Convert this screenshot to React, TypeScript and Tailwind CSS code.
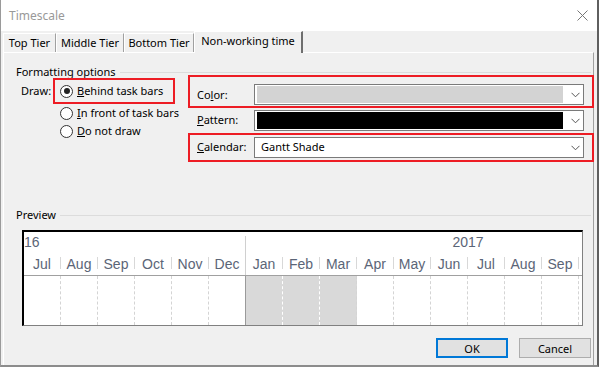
const months = ['Jul', 'Aug', 'Sep', 'Oct', 'Nov', 'Dec', 'Jan', 'Feb', 'Mar', 'Apr', 'May', 'Jun', 'Jul', 'Aug', 'Sep']

function Chevron() {
  return (
    <svg width="9" height="6" viewBox="0 0 9 6" className="ml-[8px] shrink-0">
      <polyline points="0.5,0.8 4.5,4.8 8.5,0.8" fill="none" stroke="#555" strokeWidth="1" />
    </svg>
  )
}

function Dropdown({ children }: { children: React.ReactNode }) {
  return (
    <div className="flex h-[21px] w-[330px] items-center border border-[#7a7a7a] bg-white pl-[2px] pr-[3px]">
      <div className="flex h-full flex-1 items-center py-[1px]">{children}</div>
      <Chevron />
    </div>
  )
}

function Radio({ checked }: { checked?: boolean }) {
  return (
    <span className="flex h-[13px] w-[13px] shrink-0 items-center justify-center rounded-full border border-[#333] bg-white">
      {checked && <span className="h-[6px] w-[6px] rounded-full bg-[#222]" />}
    </span>
  )
}

function GroupHeader({ label, className }: { label: string; className?: string }) {
  return (
    <div className={`flex h-[14px] items-center pl-[12px] pr-[2px] ${className ?? ''}`}>
      <span className="leading-[14px]">{label}</span>
      <div className="ml-[4px] h-px flex-1 bg-[#dcdcdc]" />
    </div>
  )
}

function Chart() {
  return (
    <div className="ml-[18px] mt-[8px] h-[96px] w-[561px] overflow-hidden border-t-2 border-l-2 border-t-black border-l-black border-r border-b border-r-[#808080] border-b-[#808080] bg-white font-['Liberation_Sans',Arial,sans-serif] text-[14px] text-[#5b6577]">
      <div className="flex h-[20px]">
        <div className="w-[221px] shrink-0 leading-[20px]">16</div>
        <div className="mt-[4px] w-px shrink-0 bg-[#d0d0d0]" />
        <div className="w-[444px] shrink-0 text-center leading-[20px]">2017</div>
      </div>
      <div className="flex h-[24px] border-b border-[#a0a0a0]">
        {months.map((m, i) => (
          <div key={i} className="flex w-[37px] shrink-0">
            <span className="flex-1 pt-[1px] text-center leading-[22px]">{m}</span>
            {i === 5 ? (
              <span className="w-px bg-[#d0d0d0]" />
            ) : (
              <span className="mt-[5px] h-[12px] w-px bg-[#d8d8d8]" />
            )}
          </div>
        ))}
      </div>
      <div className="flex h-[49px]">
        {months.map((m, i) => {
          const shaded = i >= 6 && i <= 8
          let cls = 'border-dashed border-[#d4d4d4]'
          if (i === 5) cls = 'border-solid border-[#9a9a9a]'
          else if (i === 6 || i === 7) cls = 'border-dashed border-white'
          return (
            <div
              key={i}
              className={`h-full w-[37px] shrink-0 border-r ${cls} ${shaded ? 'bg-[#d9d9d9]' : ''}`}
            />
          )
        })}
      </div>
    </div>
  )
}

export default function App() {
  return (
    <div className="h-[368px] w-[600px] bg-white font-['Noto_Sans',sans-serif] text-[11px] text-black">
      <div className="flex h-[367px] w-[599px] flex-col border-l border-r-2 border-b-2 border-l-[#9a9a9a] border-r-[#5f5f5f] border-b-[#8c8c8c] bg-[#f0f0f0]">
        {/* title bar */}
        <div className="flex h-[31px] shrink-0 items-center justify-between bg-white pl-[8px] pr-[8px]">
          <span className="text-[12px] text-[#999]">Timescale</span>
          <svg width="11" height="11" viewBox="0 0 11 11" className="mr-[1px]">
            <line x1="0.5" y1="0.5" x2="10.5" y2="10.5" stroke="#777" strokeWidth="1" />
            <line x1="10.5" y1="0.5" x2="0.5" y2="10.5" stroke="#777" strokeWidth="1" />
          </svg>
        </div>

        {/* tabs */}
        <div className="flex h-[21px] shrink-0 items-end pl-[2px]">
          {[
            ['Top Tier', 'w-[53px]'],
            ['Middle Tier', 'w-[68px]'],
            ['Bottom Tier', 'w-[70px]'],
          ].map(([t, w]) => (
            <div
              key={t}
              className={`${w} flex h-[19px] items-center justify-center border-t border-l border-r border-t-white border-l-white border-r-[#a0a0a0] pt-[1px]`}
            >
              {t}
            </div>
          ))}
          <div className="relative z-10 -mb-px flex h-[22px] w-[109px] items-center justify-center border-t border-l border-r-2 border-t-white border-l-white border-r-[#6e6e6e] bg-[#f0f0f0] pb-[2px]">
            Non-working time
          </div>
        </div>

        {/* panel */}
        <div className="ml-[2px] mr-[3px] flex flex-1 flex-col border-t border-l border-r border-t-white border-l-white border-r-[#a0a0a0]">
          <GroupHeader label="Formatting options" className="mt-[12px]" />

          <div className="-mt-[4px] flex">
            <div className="flex w-[184px] shrink-0 flex-col pl-[17px]">
              <div className="mt-[3px] flex items-center">
                <span className="w-[32px]">Draw:</span>
                <div className="flex h-[26px] w-[122px] items-center border-2 border-[#ed1c24] pl-[5px]">
                  <Radio checked />
                  <span className="ml-[4px]">
                    <u>B</u>ehind task bars
                  </span>
                </div>
              </div>
              <div className="ml-[39px] flex h-[18px] items-center">
                <Radio />
                <span className="ml-[4px]">
                  <u>I</u>n front of task bars
                </span>
              </div>
              <div className="ml-[39px] flex h-[19px] items-center">
                <Radio />
                <span className="ml-[4px]">
                  <u>D</u>o not draw
                </span>
              </div>
            </div>

            <div className="flex flex-col">
              <div className="flex h-[33px] w-[406px] items-end border-2 border-[#ed1c24] pb-[1px] pl-[7px]">
                <span className="flex h-[21px] w-[57px] items-center pt-[2px]">
                  Co<u>l</u>or:
                </span>
                <Dropdown>
                  <div className="h-full w-full bg-[#d3d3d3]" />
                </Dropdown>
              </div>
              <div className="flex h-[25px] items-center pl-[9px]">
                <span className="w-[57px]">
                  <u>P</u>attern:
                </span>
                <Dropdown>
                  <div className="h-full w-full bg-black" />
                </Dropdown>
              </div>
              <div className="flex h-[29px] w-[406px] items-center border-2 border-[#ed1c24] pl-[7px]">
                <span className="w-[57px]">
                  <u>C</u>alendar:
                </span>
                <Dropdown>
                  <span className="pl-[4px]">Gantt Shade</span>
                </Dropdown>
              </div>
            </div>
          </div>

          <GroupHeader label="Preview" className="mt-[46px]" />
          <Chart />

          <div className="mt-[12px] flex gap-[11px] pl-[432px]">
            <button className="h-[20px] w-[72px] border-2 border-[#0078d7] bg-[#e1e1e1] leading-none">OK</button>
            <button className="h-[20px] w-[72px] border border-[#adadad] bg-[#e1e1e1] leading-none">Cancel</button>
          </div>
        </div>
      </div>
    </div>
  )
}
